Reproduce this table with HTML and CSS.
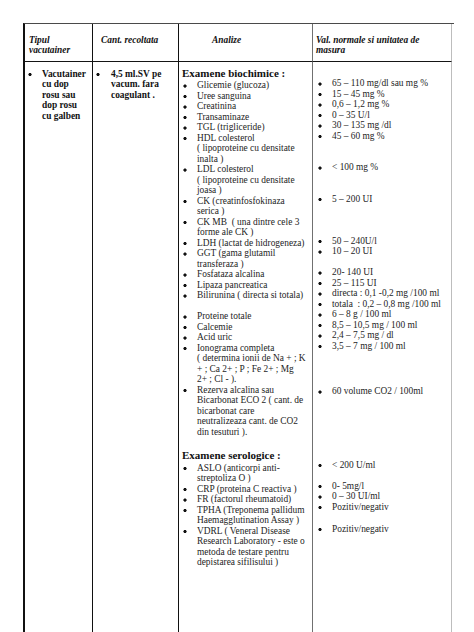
FILE: index.html
```html
<!DOCTYPE html>
<html lang="ro">
<head>
<meta charset="utf-8">
<title>Analize</title>
<link rel="stylesheet" href="styles.css">
</head>
<body>
<div class="sheet">
  <div class="cell head c1"><p class="hd">Tipul<br>vacutainer</p></div>
  <div class="cell head c2"><p class="hd">Cant. recoltata</p></div>
  <div class="cell head c3"><p class="hd">Analize</p></div>
  <div class="cell head c4"><p class="hd">Val. normale si unitatea de<br>masura</p></div>

  <div class="cell main c1">
    <ul class="list strong">
      <li>Vacutainer<br>cu dop<br>rosu sau<br>dop rosu<br>cu galben</li>
    </ul>
  </div>
  <div class="cell main c2">
    <ul class="list strong">
      <li>4,5 ml.SV pe<br>vacum. fara<br>coagulant .</li>
    </ul>
  </div>
  <div class="cell main c3">
    <p class="sec">Examene biochimice :</p>
    <ul class="list">
      <li>Glicemie (glucoza)</li>
      <li>Uree sanguina</li>
      <li>Creatinina</li>
      <li>Transaminaze</li>
      <li>TGL (trigliceride)</li>
      <li>HDL colesterol<br>( lipoproteine cu densitate<br>inalta )</li>
      <li>LDL colesterol<br>( lipoproteine cu densitate<br>joasa )</li>
      <li>CK (creatinfosfokinaza<br>serica )</li>
      <li>CK MB&nbsp; ( una dintre cele 3<br>forme ale CK )</li>
      <li>LDH (lactat de hidrogeneza)</li>
      <li>GGT (gama glutamil<br>transferaza )</li>
      <li>Fosfataza alcalina</li>
      <li>Lipaza pancreatica</li>
      <li>Bilirunina ( directa si totala)</li>
      <li class="gap1">Proteine totale</li>
      <li>Calcemie</li>
      <li>Acid uric</li>
      <li>Ionograma completa<br>( determina ionii de Na + ; K<br>+ ; Ca 2+ ; P ; Fe 2+ ; Mg<br>2+ ; Cl - ).</li>
      <li>Rezerva alcalina sau<br>Bicarbonat ECO 2 ( cant. de<br>bicarbonat care<br>neutralizeaza cant. de CO2<br>din tesuturi ).</li>
    </ul>
    <p class="sec sec-next">Examene serologice :</p>
    <ul class="list">
      <li>ASLO (anticorpi anti-<br>streptoliza O )</li>
      <li>CRP (proteina C reactiva )</li>
      <li>FR (factorul rheumatoid)</li>
      <li>TPHA (Treponema pallidum<br>Haemagglutination Assay )</li>
      <li>VDRL ( Veneral Disease<br>Research Laboratory - este o<br>metoda de testare pentru<br>depistarea sifilisului )</li>
    </ul>
  </div>
  <div class="cell main c4">
    <ul class="list">
      <li>65 – 110 mg/dl sau mg %</li>
      <li>15 – 45 mg %</li>
      <li>0,6 – 1,2 mg %</li>
      <li>0 – 35 U/l</li>
      <li>30 – 135 mg /dl</li>
      <li>45 – 60 mg %</li>
      <li class="gap2">&lt; 100 mg %</li>
      <li class="gap2">5 – 200 UI</li>
      <li class="gap3">50 – 240U/l</li>
      <li>10 – 20 UI</li>
      <li class="gap1">20- 140 UI</li>
      <li>25 – 115 UI</li>
      <li>directa : 0,1 -0,2 mg /100 ml</li>
      <li>totala&nbsp; : 0,2 – 0,8 mg /100 ml</li>
      <li>6 – 8 g / 100 ml</li>
      <li>8,5 – 10,5 mg / 100 ml</li>
      <li>2,4 – 7,5 mg / dl</li>
      <li>3,5 – 7 mg / 100 ml</li>
      <li class="gap3 gap-plus">60 volume CO2 / 100ml</li>
      <li class="gap6">&lt; 200 U/ml</li>
      <li class="gap1">0- 5mg/l</li>
      <li>0 – 30 UI/ml</li>
      <li>Pozitiv/negativ</li>
      <li class="gap1 gap-plus-s">Pozitiv/negativ</li>
    </ul>
  </div>
</div>
</body>
</html>
```

FILE: styles.css
```css
html, body {
  margin: 0;
  padding: 0;
  background: #ffffff;
}

body {
  font-family: "Liberation Serif", "Times New Roman", serif;
  font-size: 9.4px;
  color: #242424;
  height: 632px;
  overflow: hidden;
}

.sheet {
  margin: 23px 0 0 23px;
  width: 429px;
  display: grid;
  grid-template-columns: 68px 86px 134px 139px;
  border-top: 1px solid #4a4a4a;
  border-left: 2px solid #111111;
}

.cell {
  border-right: 1.5px solid #111111;
  white-space: nowrap;
}

.cell.c3 {
  border-right-color: #707070;
}

.cell.c4 {
  border-right: 1px solid #bdbdbd;
}

.head {
  padding: 10.5px 0 5.5px;
  border-bottom: 1.5px solid #151515;
}

.hd {
  margin: 0;
  line-height: 10.5px;
  font-weight: bold;
  font-style: italic;
  color: #111111;
}

.head.c1 .hd { padding-left: 4px; }
.head.c2 .hd { padding-left: 8px; }
.head.c3 .hd { padding-left: 33px; }
.head.c4 .hd { padding-left: 3px; }

.main {
  min-height: 580px;
}

.main.c1, .main.c2 { padding-top: 6.5px; }
.main.c3 { padding-top: 4.5px; }
.main.c4 { padding-top: 16.25px; }

.list {
  list-style: none;
  margin: 0;
  padding: 0;
  line-height: 10.5px;
}

.list li {
  display: flex;
  align-items: flex-start;
}

.list li::before {
  content: "";
  flex: 0 0 var(--indent, 18px);
  height: 10.5px;
  background: radial-gradient(circle at var(--dot, 6px) 55%, #111111 1.3px, transparent 1.9px);
}

.strong {
  font-weight: bold;
  color: #111111;
}

.c1 { --dot: 5px; --indent: 17px; }
.c2 { --dot: 5px; --indent: 18px; }
.c3 { --dot: 6px; --indent: 18px; }
.c4 { --dot: 7px; --indent: 19px; }

.sec {
  margin: 0 0 1.5px 3px;
  font-size: 11px;
  line-height: 12px;
  font-weight: bold;
  color: #111111;
}

.sec-next {
  margin-top: 12px;
}

.gap1 { margin-top: 10.5px; }
.gap2 { margin-top: 21px; }
.gap3 { margin-top: 31.5px; }
.gap6 { margin-top: 63px; }
.gap3.gap-plus { margin-top: 35px; }
.gap1.gap-plus-s { margin-top: 11.5px; }
```
